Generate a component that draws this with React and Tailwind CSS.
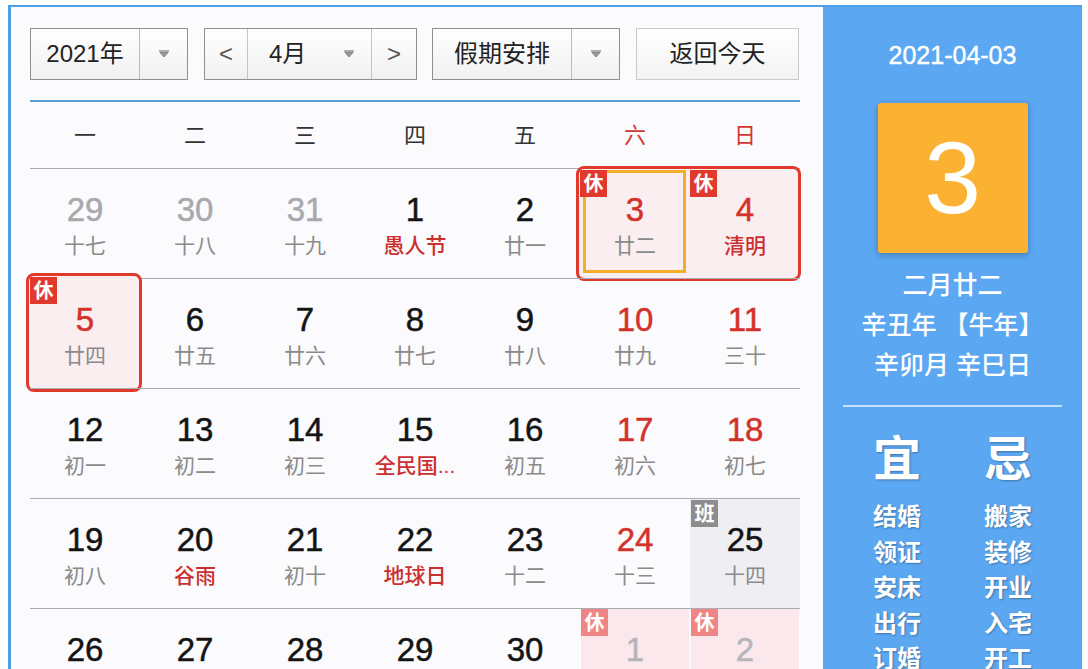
import React from "react";

const RED = "#d3322b";
const BLACK = "#141414";
const GRAY_NUM = "#a9a9ad";
const GRAY_L = "#8a8a8a";
const RED_L = "#cc2f2f";

const rows = [
  [
    { n: "29", l: "十七", nc: GRAY_NUM, lc: GRAY_L },
    { n: "30", l: "十八", nc: GRAY_NUM, lc: GRAY_L },
    { n: "31", l: "十九", nc: GRAY_NUM, lc: GRAY_L },
    { n: "1", l: "愚人节", nc: BLACK, lc: RED_L, b: true },
    { n: "2", l: "廿一", nc: BLACK, lc: GRAY_L },
    { n: "3", l: "廿二", nc: RED, lc: GRAY_L },
    { n: "4", l: "清明", nc: RED, lc: RED_L, b: true },
  ],
  [
    { n: "5", l: "廿四", nc: RED, lc: GRAY_L },
    { n: "6", l: "廿五", nc: BLACK, lc: GRAY_L },
    { n: "7", l: "廿六", nc: BLACK, lc: GRAY_L },
    { n: "8", l: "廿七", nc: BLACK, lc: GRAY_L },
    { n: "9", l: "廿八", nc: BLACK, lc: GRAY_L },
    { n: "10", l: "廿九", nc: RED, lc: GRAY_L },
    { n: "11", l: "三十", nc: RED, lc: GRAY_L },
  ],
  [
    { n: "12", l: "初一", nc: BLACK, lc: GRAY_L },
    { n: "13", l: "初二", nc: BLACK, lc: GRAY_L },
    { n: "14", l: "初三", nc: BLACK, lc: GRAY_L },
    { n: "15", l: "全民国...", nc: BLACK, lc: RED_L, b: true },
    { n: "16", l: "初五", nc: BLACK, lc: GRAY_L },
    { n: "17", l: "初六", nc: RED, lc: GRAY_L },
    { n: "18", l: "初七", nc: RED, lc: GRAY_L },
  ],
  [
    { n: "19", l: "初八", nc: BLACK, lc: GRAY_L },
    { n: "20", l: "谷雨", nc: BLACK, lc: RED_L, b: true },
    { n: "21", l: "初十", nc: BLACK, lc: GRAY_L },
    { n: "22", l: "地球日", nc: BLACK, lc: RED_L, b: true },
    { n: "23", l: "十二", nc: BLACK, lc: GRAY_L },
    { n: "24", l: "十三", nc: RED, lc: GRAY_L },
    { n: "25", l: "十四", nc: BLACK, lc: GRAY_L, ban: true },
  ],
  [
    { n: "26", l: "十五", nc: BLACK, lc: GRAY_L },
    { n: "27", l: "十六", nc: BLACK, lc: GRAY_L },
    { n: "28", l: "十七", nc: BLACK, lc: GRAY_L },
    { n: "29", l: "十八", nc: BLACK, lc: GRAY_L },
    { n: "30", l: "十九", nc: BLACK, lc: GRAY_L },
    { n: "1", l: "劳动节", nc: "#b5b5b9", lc: GRAY_L, fade: true },
    { n: "2", l: "廿一", nc: "#b5b5b9", lc: GRAY_L, fade: true },
  ],
];

const FONT = { fontFamily: '"Liberation Sans", "Noto Sans CJK SC", sans-serif' };

function Caret() {
  return (
    <svg width="12" height="8" viewBox="0 0 12 8">
      <line x1="1" y1="1" x2="11" y2="1" stroke="#7a7a7a" strokeWidth="1.2" />
      <polygon points="2,2.5 10,2.5 6,7" fill="#9a9a9a" stroke="#777" strokeWidth="0.8" />
    </svg>
  );
}

function Badge({ text, color, className = "" }) {
  return (
    <div
      className={`absolute flex h-[27px] w-[27px] items-center justify-center text-[20px] leading-none font-bold text-white ${className}`}
      style={{ backgroundColor: color }}
    >
      {text}
    </div>
  );
}

function Cell({ c }) {
  return (
    <div
      className={`relative flex h-[109px] flex-col items-center pt-[22px] ${
        c.ban ? "bg-[#efeff3]" : ""
      } ${c.fade ? "mx-[1px] bg-[#fbe8ec]" : ""}`}
    >
      {c.ban && <Badge text="班" color="#8d8d8d" className="left-[1px] top-[1px]" />}
      {c.fade && <Badge text="休" color="#f08585" className="left-0 top-0" />}
      <div
        className="relative text-[33px] leading-[38px] [-webkit-text-stroke:0.5px_currentColor]"
        style={{ color: c.nc }}
      >
        {c.n}
      </div>
      <div
        className={`relative mt-[2px] text-[21px] leading-[30px] ${c.b ? "font-medium" : ""}`}
        style={{ color: c.lc }}
      >
        {c.l}
      </div>
    </div>
  );
}

export default function App() {
  const weekdays = ["一", "二", "三", "四", "五", "六", "日"];
  const yi = ["结婚", "领证", "安床", "出行", "订婚"];
  const ji = ["搬家", "装修", "开业", "入宅", "开工"];
  return (
    <div className="h-[669px] w-[1088px] overflow-hidden bg-white pl-[8px] pt-[5px]" style={FONT}>
      <div className="flex h-[700px] w-[1074px] border-l-[3px] border-t-[2px] border-[#4f9fe8]">
        {/* calendar */}
        <div className="w-[812px] shrink-0 bg-[#fbfbfd] pl-[19px] pt-[21px]">
          {/* controls */}
          <div className="flex h-[52px] items-stretch text-[24px] text-[#222]">
            <div className="flex w-[158px] border border-[#8f8f8f] bg-linear-to-b from-white to-[#f1f1f1]">
              <div className="flex w-[109px] items-center justify-center border-r border-[#bbbbbb]">2021年</div>
              <div className="flex flex-1 items-center justify-center">
                <Caret />
              </div>
            </div>
            <div className="ml-[16px] flex w-[213px] border border-[#8f8f8f] bg-linear-to-b from-white to-[#f1f1f1]">
              <div className="flex w-[43px] items-center justify-center border-r border-[#c4c4c4] text-[#555]">&lt;</div>
              <div className="flex w-[124px] items-center border-r border-[#c4c4c4] pl-[21px]">
                <span>4月</span>
                <span className="ml-auto mr-[16px] flex">
                  <Caret />
                </span>
              </div>
              <div className="flex flex-1 items-center justify-center text-[#555]">&gt;</div>
            </div>
            <div className="ml-[15px] flex w-[188px] border border-[#8f8f8f] bg-linear-to-b from-white to-[#f1f1f1]">
              <div className="flex w-[139px] items-center justify-center border-r border-[#bbbbbb]">假期安排</div>
              <div className="flex flex-1 items-center justify-center">
                <Caret />
              </div>
            </div>
            <div className="ml-[16px] flex w-[163px] items-center justify-center border border-[#cacaca] bg-linear-to-b from-white to-[#f3f3f3]">
              返回今天
            </div>
          </div>
          <div className="mt-[20px] h-[2px] w-[770px] bg-[#5a9fd6]" />
          {/* weekday header */}
          <div className="grid h-[66px] w-[770px] grid-cols-7 items-center text-[22px]">
            {weekdays.map((w, i) => (
              <div key={w} className="text-center" style={{ color: i >= 5 ? "#d2382f" : "#333" }}>
                {w}
              </div>
            ))}
          </div>
          {/* rows */}
          {rows.map((r, ri) => (
            <div key={ri} className="relative grid w-[770px] grid-cols-7 border-t border-[#a9aeb6]">
              {ri === 0 && (
                <div className="absolute left-[546px] top-[-3px] h-[115px] w-[225px] overflow-hidden rounded-[8px] border-[3px] border-[#e2392d] bg-[#fbeef0]">
                  <div className="absolute left-[4px] top-[1px] h-[103px] w-[103px] border-[3px] border-[#f4ae2a]" />
                  <Badge text="休" color="#e2392d" className="left-[1px] top-[1px]" />
                  <Badge text="休" color="#e2392d" className="left-[111px] top-[1px]" />
                </div>
              )}
              {ri === 1 && (
                <div className="absolute left-[-4px] top-[-6px] h-[119px] w-[116px] overflow-hidden rounded-[8px] border-[3px] border-[#e2392d] bg-[#fbeef0]">
                  <Badge text="休" color="#e2392d" className="left-[1px] top-[1px]" />
                </div>
              )}
              {r.map((c, ci) => (
                <Cell key={ci} c={c} />
              ))}
            </div>
          ))}
        </div>
        {/* right panel */}
        <div className="flex w-[259px] shrink-0 flex-col items-center bg-[#5ba7f1] text-white">
          <div className="mt-[32px] text-[25px] leading-[32px] [-webkit-text-stroke:0.4px_currentColor]">2021-04-03</div>
          <div className="mt-[32px] flex h-[150px] w-[150px] items-center justify-center rounded-[3px] bg-[#fbb232] text-[102px] leading-none shadow-[0_2px_6px_rgba(0,0,0,0.25)]">
            3
          </div>
          <div className="mt-[12px] flex flex-col items-center font-medium text-[25px] leading-[40px]">
            <div>二月廿二</div>
            <div>辛丑年 【牛年】</div>
            <div>辛卯月 辛巳日</div>
          </div>
          <div className="mt-[20px] h-[2px] w-[219px] bg-[#c9e1fa]" />
          <div className="mt-[25px] flex gap-[63px] font-bold [text-shadow:1px_1px_2px_rgba(0,0,0,0.3)]">
            <div className="flex w-[48px] flex-col items-center">
              <div className="text-[48px] leading-[56px]">宜</div>
              <div className="mt-[11px] flex flex-col items-center text-[24px] leading-[35.5px]">
                {yi.map((t) => (
                  <div key={t}>{t}</div>
                ))}
              </div>
            </div>
            <div className="flex w-[48px] flex-col items-center">
              <div className="text-[48px] leading-[56px]">忌</div>
              <div className="mt-[11px] flex flex-col items-center text-[24px] leading-[35.5px]">
                {ji.map((t) => (
                  <div key={t}>{t}</div>
                ))}
              </div>
            </div>
          </div>
        </div>
      </div>
    </div>
  );
}
